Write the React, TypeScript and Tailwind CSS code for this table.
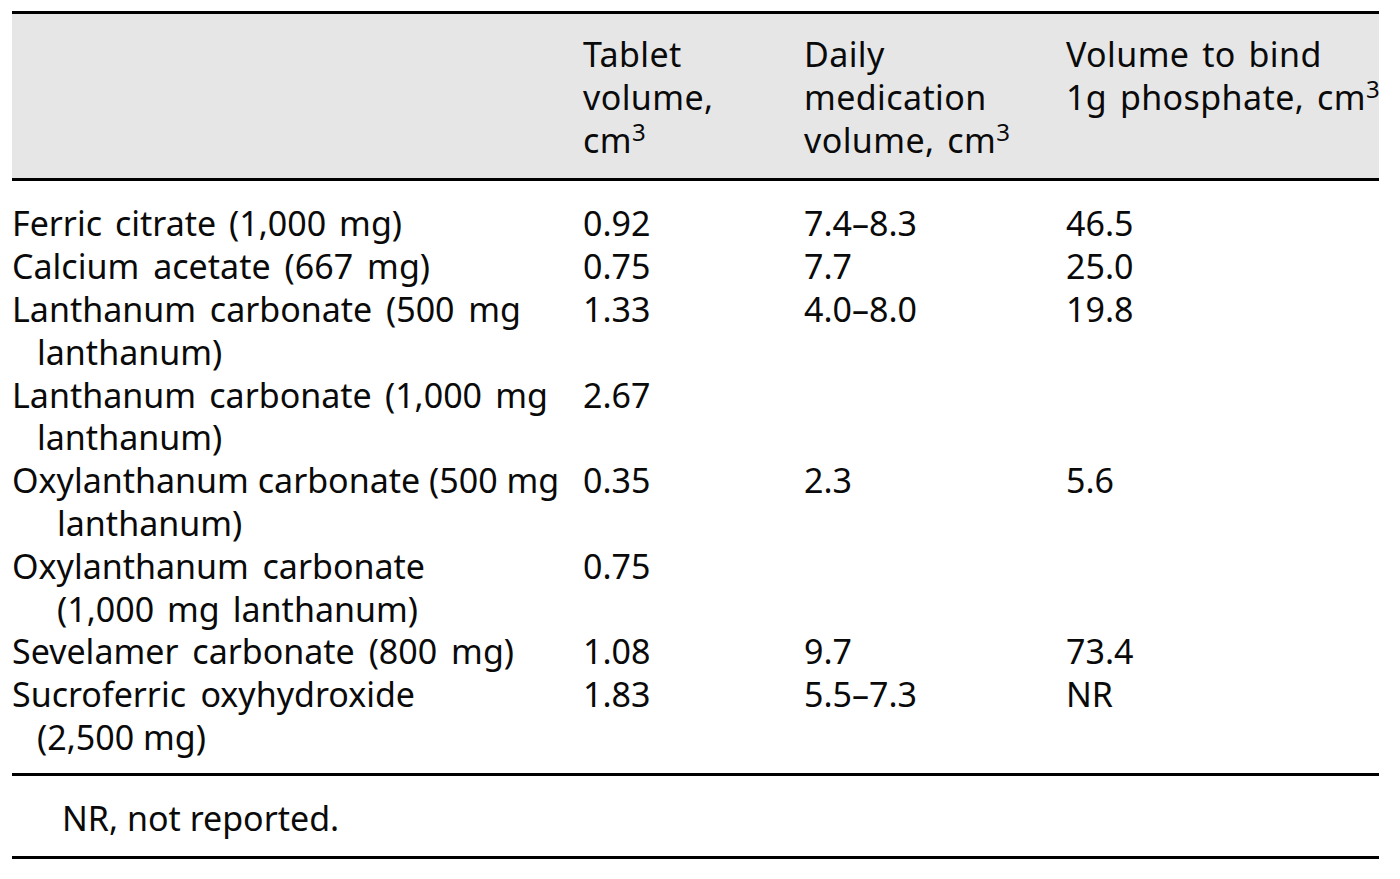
import React from "react";

type Line = { text: string; w?: string; indent?: string };
type Row = { name: Line[]; tablet: string; daily: string; bind: string };

const rows: Row[] = [
  { name: [{ text: "Ferric citrate (1,000 mg)", w: "w-[390px]" }], tablet: "0.92", daily: "7.4–8.3", bind: "46.5" },
  { name: [{ text: "Calcium acetate (667 mg)", w: "w-[418px]" }], tablet: "0.75", daily: "7.7", bind: "25.0" },
  {
    name: [
      { text: "Lanthanum carbonate (500 mg", w: "w-[509px]" },
      { text: "lanthanum)", indent: "pl-[25px]" },
    ],
    tablet: "1.33",
    daily: "4.0–8.0",
    bind: "19.8",
  },
  {
    name: [
      { text: "Lanthanum carbonate (1,000 mg", w: "w-[536px]" },
      { text: "lanthanum)", indent: "pl-[25px]" },
    ],
    tablet: "2.67",
    daily: "",
    bind: "",
  },
  {
    name: [
      { text: "Oxylanthanum carbonate (500 mg" },
      { text: "lanthanum)", indent: "pl-[45px]" },
    ],
    tablet: "0.35",
    daily: "2.3",
    bind: "5.6",
  },
  {
    name: [
      { text: "Oxylanthanum carbonate", w: "w-[413px]" },
      { text: "(1,000 mg lanthanum)", w: "w-[406px]", indent: "pl-[45px]" },
    ],
    tablet: "0.75",
    daily: "",
    bind: "",
  },
  { name: [{ text: "Sevelamer carbonate (800 mg)", w: "w-[502px]" }], tablet: "1.08", daily: "9.7", bind: "73.4" },
  {
    name: [
      { text: "Sucroferric oxyhydroxide", w: "w-[403px]" },
      { text: "(2,500 mg)", indent: "pl-[25px]" },
    ],
    tablet: "1.83",
    daily: "5.5–7.3",
    bind: "NR",
  },
];

function NameCell({ lines }: { lines: Line[] }) {
  return (
    <div>
      {lines.map((l, i) => (
        <div
          key={i}
          className={`whitespace-nowrap ${l.w ?? ""} ${l.indent ?? ""} ${l.w ? "text-justify [text-align-last:justify]" : ""}`}
        >
          {l.text}
        </div>
      ))}
    </div>
  );
}

function Cube() {
  return <sup className="text-[24px] top-[-12px]">3</sup>;
}

export default function App() {
  return (
    <div className="min-h-[879px] w-[1400px] bg-white pt-[11px] pl-[12px] text-black">
      <div
        className="w-[1367px] text-[34px] leading-[42.8px] text-[#0a0a0a]"
        style={{ fontFamily: '"Noto Sans", "Open Sans", sans-serif' }}
      >
        <div className="border-t-[3px] border-black" />
        <div className="grid grid-cols-[571px_221px_262px_1fr] bg-[#e6e6e6] pt-[19px] pb-[17px] tracking-[0.4px] [word-spacing:3.5px]">
          <div />
          <div className="flex flex-col whitespace-nowrap">
            <span>Tablet</span>
            <span>volume,</span>
            <span>
              cm<Cube />
            </span>
          </div>
          <div className="flex flex-col whitespace-nowrap">
            <span>Daily</span>
            <span>medication</span>
            <span>
              volume, cm<Cube />
            </span>
          </div>
          <div className="flex flex-col whitespace-nowrap">
            <span>Volume to bind</span>
            <span>
              1g phosphate, cm<Cube />
            </span>
          </div>
        </div>
        <div className="border-t-[3px] border-black" />
        <div className="flex flex-col pt-[21px] pb-[14px]">
          {rows.map((r, i) => (
            <div key={i} className="grid grid-cols-[571px_221px_262px_1fr]">
              <NameCell lines={r.name} />
              <div>{r.tablet}</div>
              <div>{r.daily}</div>
              <div>{r.bind}</div>
            </div>
          ))}
        </div>
        <div className="border-t-[3px] border-black" />
        <div className="pt-[21px] pb-[16px] pl-[50px]">NR, not reported.</div>
        <div className="border-t-[3px] border-black" />
      </div>
    </div>
  );
}
